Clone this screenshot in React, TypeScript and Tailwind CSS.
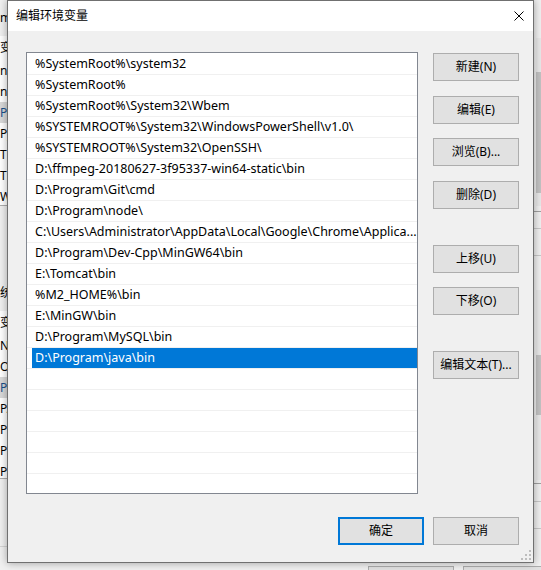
import React from 'react';

const paths: string[] = [
  '%SystemRoot%\\system32',
  '%SystemRoot%',
  '%SystemRoot%\\System32\\Wbem',
  '%SYSTEMROOT%\\System32\\WindowsPowerShell\\v1.0\\',
  '%SYSTEMROOT%\\System32\\OpenSSH\\',
  'D:\\ffmpeg-20180627-3f95337-win64-static\\bin',
  'D:\\Program\\Git\\cmd',
  'D:\\Program\\node\\',
  'C:\\Users\\Administrator\\AppData\\Local\\Google\\Chrome\\Applica...',
  'D:\\Program\\Dev-Cpp\\MinGW64\\bin',
  'E:\\Tomcat\\bin',
  '%M2_HOME%\\bin',
  'E:\\MinGW\\bin',
  'D:\\Program\\MySQL\\bin',
  'D:\\Program\\java\\bin',
];

const selectedIndex = 14;
const totalRows = 21;

const userVars = ['nodejs', 'npm_config', 'Path', 'PyCharm', 'TEMP', 'TMP', 'WebStorm'];
const sysVars = ['NUMBER_OF_PROCESSORS', 'OS', 'Path', 'PATHEXT', 'PROCESSOR_ARCHITECTURE', 'PROCESSOR_LEVEL', 'PROCESSOR_REVISION'];

const VarList: React.FC<{ items: string[]; className: string }> = ({ items, className }) => (
  <div className={`w-[60px] bg-white border-b border-[#adadad] overflow-hidden ${className}`}>
    <div className="h-[24px] flex items-center text-[12px]">变量</div>
    {items.map((v) => (
      <div
        key={v}
        className={`h-[21px] flex items-center whitespace-nowrap text-[12px] ${
          v === 'Path' ? 'bg-[#d9d9d9] text-[#1a4f8a]' : 'text-black'
        }`}
      >
        {v}
      </div>
    ))}
  </div>
);

// Window behind the dialog (only its edges show)
const BackWindow: React.FC = () => (
  <div className="absolute inset-0 flex">
    {/* left edge: variable lists */}
    <div className="w-[60px] flex flex-col pt-[10px]">
      <div className="h-[16px] text-[12px] leading-[16px] text-black">m</div>
      <VarList items={userVars} className="mt-[10px] h-[170px]" />
      <div className="mt-[79px] h-[16px] -ml-[12px] whitespace-nowrap text-[12px] leading-[16px] text-black">系统变量(S)</div>
      <VarList items={sysVars} className="mt-[10px] h-[168px]" />
      <div className="mt-[67px] w-[20px] h-px bg-[#d4d4d4]" />
    </div>

    <div className="flex-1" />

    {/* right edge: scrollbars and grid lines */}
    <div className="w-[7px] flex flex-col">
      <div className="mt-[38px] ml-[2px] h-[168px] bg-[#e8e8e8] pt-[34px]">
        <div className="h-[121px] bg-[#c2c2c2]" />
      </div>
      <div className="mt-[5px] h-px bg-[#a0a0a0]" />
      <div className="mt-[16px] h-px bg-[#c8c8c8]" />
      <div className="mt-[26px] h-px bg-[#c8c8c8]" />
      <div className="mt-[34px] ml-[2px] h-[190px] bg-[#e8e8e8] pt-[65px]">
        <div className="h-[60px] bg-[#c2c2c2]" />
      </div>
      <div className="mt-[3px] h-px bg-[#a0a0a0]" />
      <div className="mt-[17px] h-px bg-[#c8c8c8]" />
      <div className="mt-[26px] h-px bg-[#c8c8c8]" />
    </div>

    {/* its OK / Cancel buttons, peeking below the dialog */}
    <div className="absolute left-[368px] top-[566px] flex gap-[9px]">
      <div className="w-[86px] h-[24px] bg-[#e1e1e1] border border-[#adadad]" />
      <div className="w-[86px] h-[24px] bg-[#e1e1e1] border border-[#adadad]" />
    </div>
  </div>
);

const Button: React.FC<{ label: string; primary?: boolean; className?: string }> = ({ label, primary, className }) => (
  <button
    className={`w-[86px] h-[28px] bg-[#e1e1e1] text-[12px] text-black flex items-center justify-center ${
      primary ? 'border-2 border-[#0078d7]' : 'border border-[#adadad]'
    } ${className ?? ''}`}
  >
    {label}
  </button>
);

export default function App() {
  return (
    <div
      className="relative w-[541px] h-[570px] overflow-hidden bg-[#f0f0f0]"
      style={{ fontFamily: '"Noto Sans", "Noto Sans CJK SC", sans-serif' }}
    >
      <BackWindow />

      {/* Dialog */}
      <div className="absolute left-[7px] top-0 w-[527px] h-[563px] border border-[#707070] bg-[#f0f0f0] flex flex-col shadow-[0_0_8px_rgba(0,0,0,0.35)]">
        {/* Title bar */}
        <div className="h-[30px] bg-white flex items-center justify-between pl-[8px] pr-[9px] shrink-0">
          <span className="text-[12px] text-black">编辑环境变量</span>
          <svg width="10" height="10" viewBox="0 0 10 10" className="text-black">
            <path d="M0.5 0.5 L9.5 9.5 M9.5 0.5 L0.5 9.5" stroke="currentColor" strokeWidth="1" fill="none" />
          </svg>
        </div>

        {/* Body */}
        <div className="flex pl-[18px] pt-[21px]">
          <div className="w-[392px] h-[442px] border border-[#828790] bg-white overflow-hidden pt-px">
            {Array.from({ length: totalRows }).map((_, i) => {
              const text = paths[i];
              const selected = i === selectedIndex;
              return (
                <div key={i} className="h-[21px] border-b border-[#f0f0f0]">
                  <div
                    className={`h-[20px] ml-[5px] pl-[3px] flex items-center whitespace-nowrap overflow-hidden text-[12.5px] ${
                      selected ? 'bg-[#0078d7] text-white' : 'text-black'
                    }`}
                  >
                    {text ?? ''}
                  </div>
                </div>
              );
            })}
          </div>

          <div className="ml-[15px] flex flex-col">
            <Button label="新建(N)" className="mt-px" />
            <Button label="编辑(E)" className="mt-[15px]" />
            <Button label="浏览(B)..." className="mt-[14px]" />
            <Button label="删除(D)" className="mt-[15px]" />
            <Button label="上移(U)" className="mt-[36px]" />
            <Button label="下移(O)" className="mt-[14px]" />
            <Button label="编辑文本(T)..." className="mt-[36px]" />
          </div>
        </div>

        {/* Footer */}
        <div className="flex justify-end gap-[9px] pr-[14px] mt-[23px]">
          <Button label="确定" primary />
          <Button label="取消" />
        </div>

        {/* Resize grip */}
        <svg width="10" height="10" viewBox="0 0 10 10" className="absolute right-[2px] bottom-[2px]">
          <rect x="8" y="0" width="2" height="2" fill="#bdbdbd" />
          <rect x="4" y="4" width="2" height="2" fill="#bdbdbd" />
          <rect x="8" y="4" width="2" height="2" fill="#bdbdbd" />
          <rect x="0" y="8" width="2" height="2" fill="#bdbdbd" />
          <rect x="4" y="8" width="2" height="2" fill="#bdbdbd" />
          <rect x="8" y="8" width="2" height="2" fill="#bdbdbd" />
        </svg>
      </div>
    </div>
  );
}
